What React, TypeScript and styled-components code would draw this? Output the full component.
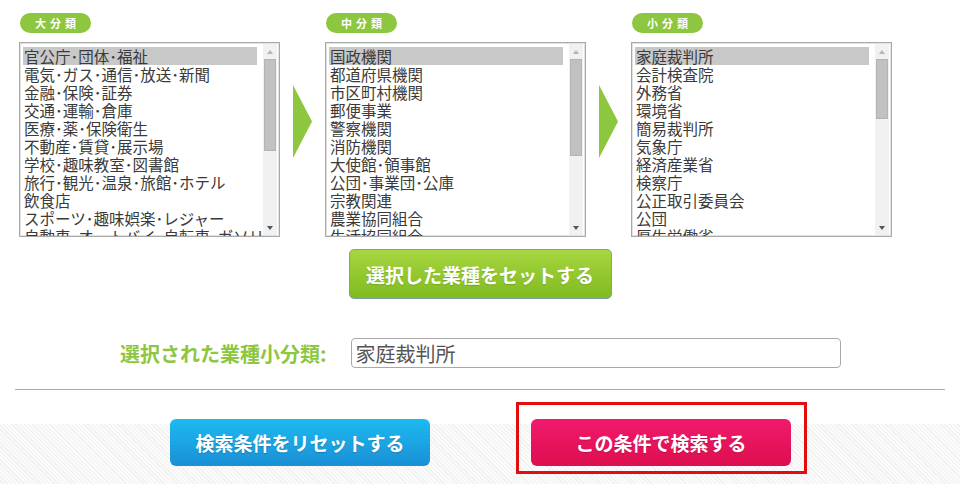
import React from 'react';
import styled, { createGlobalStyle } from 'styled-components';

const GlobalStyle = createGlobalStyle`
  html, body {
    margin: 0;
    padding: 0;
    background: #fff;
  }
  body {
    font-family: "Noto Sans CJK JP", "Noto Sans", sans-serif;
    color: #333;
  }
`

const Page = styled.div`
  width: 960px;
  height: 484px;
  overflow: hidden;
  padding-top: 13px;
  box-sizing: border-box;
`

const PickerRow = styled.div`
  display: flex;
  gap: 13px;
  padding-left: 19px;
`

const PickerColumn = styled.div`
  display: flex;
  flex-direction: column;
  gap: 9px;
  width: 261px;
`

const Badge = styled.span`
  display: inline-flex;
  align-items: center;
  justify-content: center;
  width: 71px;
  height: 20px;
  margin-left: 1px;
  border-radius: 10px;
  background: #8dc63f;
  color: #fff;
  font-size: 11px;
  font-weight: 700;
  letter-spacing: 4px;
  text-indent: 4px;
`

const ListBox = styled.div`
  display: flex;
  height: 195px;
  box-sizing: border-box;
  border: 1px solid #a9a9a9;
  box-shadow: inset 0 0 0 1px #e2e2e2;
  background: #fff;
  overflow: hidden;
`

const ListItems = styled.ul`
  flex: 1;
  list-style: none;
  margin: 0;
  padding: 4px 6px 0 3px;
  overflow: hidden;
`

const ListItem = styled.li<{ $selected?: boolean }>`
  height: 18px;
  line-height: 18px;
  padding-left: 1px;
  font-size: 15.5px;
  color: #3a3a3a;
  white-space: nowrap;
  background: ${p => (p.$selected ? '#c8c8c8' : 'transparent')};
`

const ScrollBar = styled.div`
  display: flex;
  flex-direction: column;
  width: 14px;
  margin: 1px 2px 1px 0;
  background: #f1f1f1;
`

const ScrollArrow = styled.div<{ $down?: boolean }>`
  display: flex;
  align-items: center;
  justify-content: center;
  height: 15px;

  &::before {
    content: '';
    border-left: 3px solid transparent;
    border-right: 3px solid transparent;
    ${p =>
      p.$down
        ? 'border-top: 4px solid #555;'
        : 'border-bottom: 4px solid #b5b5b5;'}
  }
`

const ScrollTrack = styled.div`
  flex: 1;
  padding: 0 1px;
`

const ScrollThumb = styled.div<{ $top: number; $height: number }>`
  margin-top: ${p => p.$top}px;
  height: ${p => p.$height}px;
  background: #c1c1c1;
  border: 1px solid #b4b4b4;
  box-sizing: border-box;
`

const ArrowCell = styled.div`
  width: 19px;
  margin-top: 72px;
`

const CenterRow = styled.div`
  display: flex;
  justify-content: center;
  margin-top: 12px;
`

const SetButton = styled.button`
  width: 263px;
  height: 50px;
  border: 1px solid #7f9fa6;
  border-radius: 5px;
  background: linear-gradient(#a7d640, #80bb1f);
  color: #fff;
  font-family: inherit;
  font-size: 19px;
  font-weight: 700;
  text-shadow: 0 1px 1px rgba(0, 0, 0, 0.15);
  cursor: pointer;
`

const ResultRow = styled.div`
  display: flex;
  align-items: center;
  gap: 24px;
  padding-left: 120px;
  margin-top: 39px;
`

const ResultLabel = styled.label`
  color: #8dc63f;
  font-size: 20px;
  font-weight: 700;
  white-space: nowrap;
`

const ResultInput = styled.input`
  width: 490px;
  height: 30px;
  box-sizing: border-box;
  padding: 0 4px;
  border: 1px solid #a8a8a8;
  border-radius: 4px;
  font-family: inherit;
  font-size: 20px;
  color: #555;
  outline: none;
`

const Divider = styled.hr`
  margin: 21px 15px 0;
  border: 0;
  border-top: 1px solid #a9a9a9;
`

const ActionBand = styled.div`
  display: flex;
  align-items: flex-start;
  gap: 86px;
  padding: 12px 0 20px 170px;
  background:
    linear-gradient(#fff, #fff) top / 100% 34px no-repeat,
    repeating-linear-gradient(45deg, #f0f0f0 0 1px, #fbfbfb 1px 3px);
`

const ActionButton = styled.button<{ $tone: 'blue' | 'pink' }>`
  width: 260px;
  height: 47px;
  border: 0;
  border-radius: 6px;
  background: ${p =>
    p.$tone === 'blue'
      ? 'linear-gradient(#1dbaf1, #1a8fd6)'
      : 'linear-gradient(#f2196d, #dd0f4f)'};
  color: #fff;
  font-family: inherit;
  font-size: 19px;
  font-weight: 700;
  text-shadow: 0 1px 1px rgba(0, 0, 0, 0.2);
  cursor: pointer;
`

const ResetSlot = styled.div`
  margin-top: 17px;
`

const Highlight = styled.div`
  padding: 14px 13px 5px 12px;
  border: 3px solid #e30d0d;
`

const majorItems = [
  '官公庁･団体･福祉',
  '電気･ガス･通信･放送･新聞',
  '金融･保険･証券',
  '交通･運輸･倉庫',
  '医療･薬･保険衛生',
  '不動産･賃貸･展示場',
  '学校･趣味教室･図書館',
  '旅行･観光･温泉･旅館･ホテル',
  '飲食店',
  'スポーツ･趣味娯楽･レジャー',
  '自動車･オートバイ･自転車･ガソリンスタンド',
]

const middleItems = [
  '国政機関',
  '都道府県機関',
  '市区町村機関',
  '郵便事業',
  '警察機関',
  '消防機関',
  '大使館･領事館',
  '公団･事業団･公庫',
  '宗教関連',
  '農業協同組合',
  '生活協同組合',
]

const minorItems = [
  '家庭裁判所',
  '会計検査院',
  '外務省',
  '環境省',
  '簡易裁判所',
  '気象庁',
  '経済産業省',
  '検察庁',
  '公正取引委員会',
  '公団',
  '厚生労働省',
]

type PickerProps = {
  label: string
  items: string[]
  thumbHeight: number
}

const Picker: React.FC<PickerProps> = ({ label, items, thumbHeight }) => (
  <PickerColumn>
    <Badge>{label}</Badge>
    <ListBox>
      <ListItems>
        {items.map((item, i) => (
          <ListItem key={item} $selected={i === 0}>
            {item}
          </ListItem>
        ))}
      </ListItems>
      <ScrollBar>
        <ScrollArrow />
        <ScrollTrack>
          <ScrollThumb $top={0} $height={thumbHeight} />
        </ScrollTrack>
        <ScrollArrow $down />
      </ScrollBar>
    </ListBox>
  </PickerColumn>
)

const NextArrow: React.FC = () => (
  <ArrowCell>
    <svg width="19" height="73" viewBox="0 0 19 73">
      <polygon points="0,0 19,36.5 0,73" fill="#8dc63f" />
    </svg>
  </ArrowCell>
)

export default function App() {
  return (
    <>
      <GlobalStyle />
      <Page>
        <PickerRow>
          <Picker label="大分類" items={majorItems} thumbHeight={92} />
          <NextArrow />
          <Picker label="中分類" items={middleItems} thumbHeight={97} />
          <NextArrow />
          <Picker label="小分類" items={minorItems} thumbHeight={60} />
        </PickerRow>

        <CenterRow>
          <SetButton>選択した業種をセットする</SetButton>
        </CenterRow>

        <ResultRow>
          <ResultLabel htmlFor="selected-minor">選択された業種小分類:</ResultLabel>
          <ResultInput id="selected-minor" defaultValue="家庭裁判所" readOnly />
        </ResultRow>

        <Divider />

        <ActionBand>
          <ResetSlot>
            <ActionButton $tone="blue">検索条件をリセットする</ActionButton>
          </ResetSlot>
          <Highlight>
            <ActionButton $tone="pink">この条件で検索する</ActionButton>
          </Highlight>
        </ActionBand>
      </Page>
    </>
  )
}
